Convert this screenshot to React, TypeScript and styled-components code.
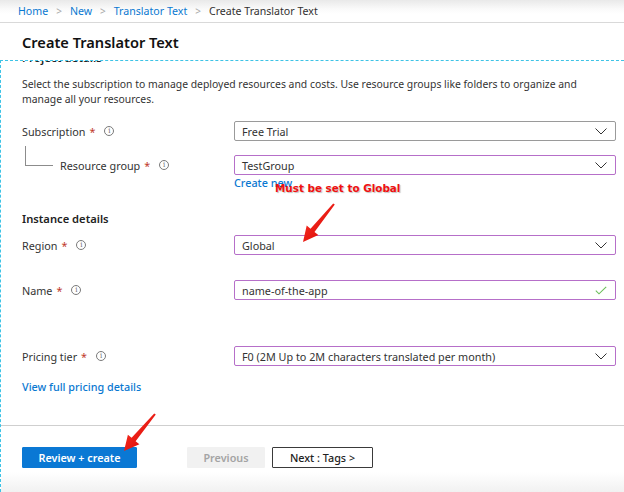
import React from "react";
import styled, { createGlobalStyle } from "styled-components";

const Global = createGlobalStyle`
  html, body { margin: 0; padding: 0; background: #fff; }
  body { font-family: "Noto Sans", "Open Sans", sans-serif; color: #323130; }
  * { box-sizing: border-box; }
`;

const Page = styled.div`
  position: relative;
  width: 624px;
  height: 492px;
  overflow: hidden;
  display: flex;
  flex-direction: column;
  background: #fff;
`;

const Breadcrumb = styled.nav`
  height: 23px;
  flex: none;
  display: flex;
  align-items: center;
  gap: 6px;
  padding-left: 16px;
  font-size: 10.6px;
  background: linear-gradient(to bottom, #e9e9e9 0px, #fafafa 9px, #ffffff 14px);
  border-bottom: 1px solid #d9d9d9;
`;

const Crumb = styled.span<{ $current?: boolean }>`
  color: ${(p) => (p.$current ? "#323130" : "#0a78d1")};
  white-space: nowrap;
  margin: 0 2px;
`;

const Sep = styled.span`
  color: #a8a8a8;
  font-size: 10px;
`;

const TitleBar = styled.header`
  height: 37px;
  flex: none;
  display: flex;
  align-items: center;
  padding-left: 22px;
`;

const Title = styled.h1`
  margin: 0;
  font-size: 14.6px;
  font-weight: 600;
  color: #111;
`;

const Panel = styled.section`
  flex: 1;
  display: flex;
  flex-direction: column;
  border-top: 1px dashed #3ec3e6;
  border-left: 1px dashed #3ec3e6;
  overflow: hidden;
`;

const Body = styled.div`
  padding-left: 21px;
  display: flex;
  flex-direction: column;
`;

const ClippedHeading = styled.h2`
  margin: -10px 0 0;
  font-size: 11.5px;
  line-height: 14px;
  font-weight: 600;
  color: #222;
`;

const Description = styled.p`
  margin: 12px 0 0;
  font-size: 10.4px;
  line-height: 15px;
  color: #333;
  width: 590px;
`;

const Row = styled.div<{ $top: number }>`
  display: flex;
  align-items: center;
  margin-top: ${(p) => p.$top}px;
  height: 20px;
`;

const Label = styled.div<{ $indent?: boolean }>`
  position: relative;
  width: 212px;
  flex: none;
  display: flex;
  align-items: center;
  font-size: 10.8px;
  color: #333;
  padding-left: ${(p) => (p.$indent ? "38px" : "0")};
  ${(p) =>
    p.$indent &&
    `
    &::before {
      content: "";
      position: absolute;
      left: 3px;
      top: -12px;
      width: 27px;
      height: 19px;
      border-left: 1px solid #8c8c8c;
      border-bottom: 1px solid #8c8c8c;
    }
  `}
`;

const Star = styled.span`
  color: #c0392b;
  margin-left: 4px;
`;

const Info = styled.span`
  width: 10px;
  height: 10px;
  border: 1px solid #7a7a7a;
  border-radius: 50%;
  margin-left: 9px;
  display: inline-flex;
  align-items: center;
  justify-content: center;
  font-size: 7px;
  line-height: 1;
  color: #6a6a6a;
  font-family: "DejaVu Serif", serif;
`;

const Field = styled.div<{ $tone: "plain" | "accent" }>`
  width: 382px;
  height: 20px;
  flex: none;
  display: flex;
  align-items: center;
  justify-content: space-between;
  padding: 0 8px 0 7px;
  border-width: 1px;
  border-style: solid;
  border-color: ${(p) => (p.$tone === "accent" ? "#b66fc9" : "#9a9a9a")};
  border-radius: 2px;
  font-size: 10.8px;
  color: #333;
`;

const Link = styled.a<{ $top: number; $indent?: number }>`
  display: block;
  margin-top: ${(p) => p.$top}px;
  margin-left: ${(p) => p.$indent ?? 0}px;
  font-size: 10.8px;
  line-height: 14px;
  color: #0a78d1;
  font-weight: 500;
  text-decoration: none;
`;

const SectionHeading = styled.h3<{ $top: number }>`
  margin: ${(p) => p.$top}px 0 0;
  font-size: 11.2px;
  line-height: 14px;
  font-weight: 600;
  color: #222;
`;

const Divider = styled.hr`
  margin: 31px 0 0;
  border: 0;
  border-top: 1px solid #cfcfcf;
  height: 0;
`;

const Footer = styled.footer`
  flex: 1;
  display: flex;
  align-items: flex-start;
  padding: 21px 0 0 21px;
  background: linear-gradient(to bottom, #fff 0%, #fff 70%, #f1f1f1 100%);
`;

const Button = styled.button<{ $variant: "primary" | "disabled" | "outline"; $w: number; $gap?: number }>`
  width: ${(p) => p.$w}px;
  height: 21px;
  margin-left: ${(p) => p.$gap ?? 0}px;
  font-family: inherit;
  font-size: 10.8px;
  font-weight: 600;
  border-radius: 1px;
  padding: 0;
  cursor: pointer;
  ${(p) =>
    p.$variant === "primary"
      ? `background:#0a78d4; color:#fff; border:1px solid #0a78d4;`
      : p.$variant === "disabled"
      ? `background:#f1f1f1; color:#a4a4a4; border:1px solid #f1f1f1;`
      : `background:#fff; color:#222; border:1px solid #3a3a3a; font-weight:500;`}
`;

const Overlay = styled.svg`
  position: absolute;
  left: 0;
  top: 0;
  pointer-events: none;
`;

const Note = styled.span`
  position: absolute;
  left: 275px;
  top: 182px;
  font-family: "DejaVu Sans", "Open Sans", sans-serif;
  font-weight: 700;
  font-size: 10.4px;
  color: #f01010;
  text-shadow: 1px 1px 1px rgba(0, 0, 0, 0.25);
  white-space: nowrap;
`;

const Chevron = () => (
  <svg width="12" height="7" viewBox="0 0 12 7">
    <path d="M0.5 0.5 L6 6 L11.5 0.5" fill="none" stroke="#333" strokeWidth="1" />
  </svg>
);

const Check = () => (
  <svg width="12" height="9" viewBox="0 0 12 9">
    <path d="M0.8 4.6 L4 7.8 L11.2 0.8" fill="none" stroke="#6cbf5a" strokeWidth="1.1" />
  </svg>
);

function arrowPath(tx: number, ty: number, hx: number, hy: number) {
  const dx = hx - tx;
  const dy = hy - ty;
  const len = Math.hypot(dx, dy);
  const ux = dx / len;
  const uy = dy / len;
  const nx = -uy;
  const ny = ux;
  const headLen = 15;
  const headW = 7.5;
  const bx = hx - ux * headLen;
  const by = hy - uy * headLen;
  const pts = [
    [tx + nx * 1, ty + ny * 1],
    [bx + nx * 2.6, by + ny * 2.6],
    [bx + nx * headW, by + ny * headW],
    [hx, hy],
    [bx - nx * headW, by - ny * headW],
    [bx - nx * 2.6, by - ny * 2.6],
    [tx - nx * 1, ty - ny * 1],
  ];
  return "M" + pts.map((p) => `${p[0].toFixed(1)} ${p[1].toFixed(1)}`).join(" L") + " Z";
}

const InfoIcon = () => <Info>i</Info>;

export default function App() {
  return (
    <>
      <Global />
      <Page>
        <Breadcrumb>
          <Crumb>Home</Crumb>
          <Sep>&gt;</Sep>
          <Crumb>New</Crumb>
          <Sep>&gt;</Sep>
          <Crumb>Translator Text</Crumb>
          <Sep>&gt;</Sep>
          <Crumb $current>Create Translator Text</Crumb>
        </Breadcrumb>
        <TitleBar>
          <Title>Create Translator Text</Title>
        </TitleBar>
        <Panel>
          <Body>
            <ClippedHeading>Project details</ClippedHeading>
            <Description>
              Select the subscription to manage deployed resources and costs. Use resource groups like folders to organize and
              manage all your resources.
            </Description>
            <Row $top={14}>
              <Label>
                Subscription<Star>*</Star>
                <InfoIcon />
              </Label>
              <Field $tone="plain">
                Free Trial
                <Chevron />
              </Field>
            </Row>
            <Row $top={14}>
              <Label $indent>
                Resource group<Star>*</Star>
                <InfoIcon />
              </Label>
              <Field $tone="accent">
                TestGroup
                <Chevron />
              </Field>
            </Row>
            <Link $top={1} $indent={212}>Create new</Link>
            <SectionHeading $top={22}>Instance details</SectionHeading>
            <Row $top={9}>
              <Label>
                Region<Star>*</Star>
                <InfoIcon />
              </Label>
              <Field $tone="accent">
                Global
                <Chevron />
              </Field>
            </Row>
            <Row $top={25}>
              <Label>
                Name<Star>*</Star>
                <InfoIcon />
              </Label>
              <Field $tone="accent">
                name-of-the-app
                <Check />
              </Field>
            </Row>
            <Row $top={46}>
              <Label>
                Pricing tier<Star>*</Star>
                <InfoIcon />
              </Label>
              <Field $tone="accent">
                F0 (2M Up to 2M characters translated per month)
                <Chevron />
              </Field>
            </Row>
            <Link $top={14}>View full pricing details</Link>
          </Body>
          <Divider />
          <Footer>
            <Button $variant="primary" $w={115}>Review + create</Button>
            <Button $variant="disabled" $w={78} $gap={50}>Previous</Button>
            <Button $variant="outline" $w={101} $gap={7}>Next : Tags &gt;</Button>
          </Footer>
        </Panel>
        <Note>Must be set to Global</Note>
        <Overlay width={624} height={492} viewBox="0 0 624 492">
          <defs>
            <linearGradient id="arrowRed" x1="0" y1="0" x2="1" y2="1">
              <stop offset="0" stopColor="#ff3a2a" />
              <stop offset="1" stopColor="#d40000" />
            </linearGradient>
          </defs>
          <path d={arrowPath(334, 204, 303, 242)} fill="url(#arrowRed)" />
          <path d={arrowPath(155, 414, 124, 451)} fill="url(#arrowRed)" />
        </Overlay>
      </Page>
    </>
  );
}
